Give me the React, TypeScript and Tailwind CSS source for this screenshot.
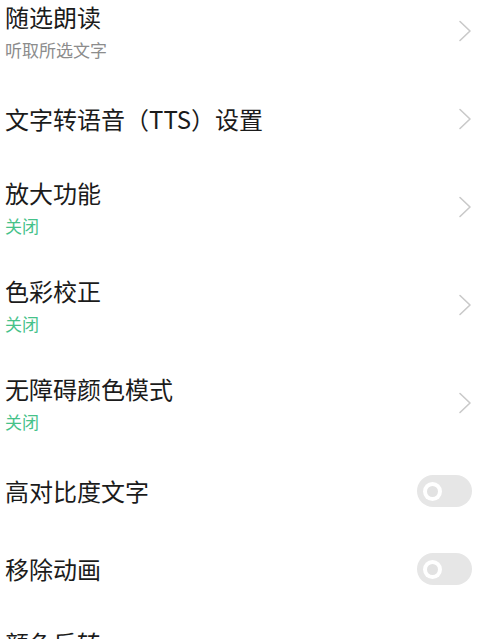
import React from 'react';

type Item = {
  title: string;
  sub?: string;
  subTone?: 'gray' | 'green';
  kind: 'link' | 'toggle';
  tall?: boolean;
};

const items: Item[] = [
  { title: '随选朗读', sub: '听取所选文字', subTone: 'gray', kind: 'link', tall: true },
  { title: '文字转语音（TTS）设置', kind: 'link' },
  { title: '放大功能', sub: '关闭', subTone: 'green', kind: 'link', tall: true },
  { title: '色彩校正', sub: '关闭', subTone: 'green', kind: 'link', tall: true },
  { title: '无障碍颜色模式', sub: '关闭', subTone: 'green', kind: 'link', tall: true },
  { title: '高对比度文字', kind: 'toggle' },
  { title: '移除动画', kind: 'toggle' },
  // last row runs past the bottom edge; its switch sits lower than the title
  { title: '颜色反转', kind: 'toggle', tall: true },
];

const Chevron = () => (
  <svg width="14" height="22" viewBox="0 0 14 22" fill="none" className="shrink-0">
    <path d="M2 1.5 L12 11 L2 20.5" stroke="#c9c9c9" strokeWidth="1.6" strokeLinecap="round" strokeLinejoin="round" />
  </svg>
);

const Toggle = () => (
  <div className="flex h-[32px] w-[55px] shrink-0 items-center rounded-full bg-[#e6e6e6] pl-[6px]">
    <div className="flex h-[19px] w-[19px] items-center justify-center rounded-full bg-white">
      <div className="h-[11px] w-[11px] rounded-full bg-[#e2e2e2]" />
    </div>
  </div>
);

export default function App() {
  return (
    <div
      className="h-[639px] w-[482px] overflow-hidden bg-white"
      style={{ fontFamily: '"Noto Sans CJK SC", "Noto Sans", sans-serif' }}
    >
      <div className="-mt-[18px] flex flex-col">
        {items.map((item, i) => (
          <div
            key={i}
            className={`flex items-center justify-between pl-[5px] pr-[10px] ${item.tall ? 'h-[98px]' : 'h-[78px]'}`}
          >
            <div className="flex flex-col gap-[7px]">
              <span className="text-[24px] leading-[30px] text-[#1b1b1b]">{item.title}</span>
              {item.tall && (
                <span
                  className={`h-[22px] text-[17px] leading-[22px] ${item.subTone === 'green' ? 'text-[#46c28a]' : 'text-[#8c8c8c]'}`}
                >
                  {item.sub}
                </span>
              )}
            </div>
            {item.kind === 'link' ? <Chevron /> : <Toggle />}
          </div>
        ))}
      </div>
    </div>
  );
}
